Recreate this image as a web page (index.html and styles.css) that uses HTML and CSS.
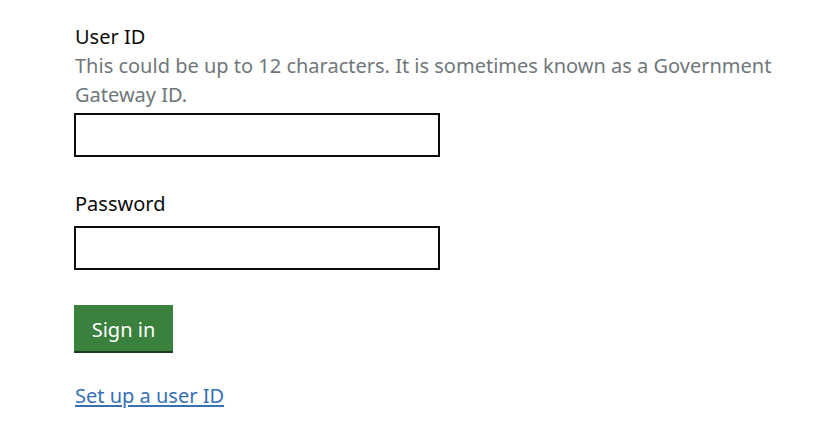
FILE: index.html
```html
<!DOCTYPE html>
<html lang="en-GB">
<head>
  <meta charset="UTF-8">
  <meta name="viewport" content="width=device-width, initial-scale=1.0">
  <title>Sign in</title>
  <link rel="stylesheet" href="styles.css">
</head>
<body>
  <form class="form" action="#">
    <div class="form-group form-group--first">
      <label class="label" for="userId">User ID</label>
      <div class="hint">This could be up to 12 characters. It is sometimes known as a Government Gateway ID.</div>
      <input class="input" id="userId" type="text">
    </div>
    <div class="form-group">
      <label class="label label--password" for="password">Password</label>
      <input class="input" id="password" type="password">
    </div>
    <button class="button" type="submit">Sign in</button>
    <p class="p"><a class="link" href="#">Set up a user ID</a></p>
  </form>
</body>
</html>
```

FILE: styles.css
```css
body {
  margin: 0;
  padding: 22px 0 0 74px;
  background-color: #FFFFFF;
  font-family: "Noto Sans", Arial, sans-serif;
  font-size: 20px;
  line-height: 29px;
  color: #0B0C0C;
}

.form {
  width: 710px;
}

.form-group {
  margin-bottom: 35px;
}

.form-group--first {
  margin-bottom: 32px;
}

.label {
  display: block;
  padding-left: 1px;
}

.label--password {
  margin-bottom: 8px;
}

.hint {
  padding-left: 1px;
  margin-bottom: 4px;
  color: #6F777B;
}

.input {
  display: block;
  box-sizing: border-box;
  width: 366px;
  height: 44px;
  margin: 0;
  border: 2px solid #0B0C0C;
  padding: 5px;
  font: inherit;
  background-color: #FFFFFF;
}

.button {
  display: block;
  box-sizing: border-box;
  width: 99px;
  height: 46px;
  margin: 0;
  border: 0;
  padding: 2px 0 0;
  font: inherit;
  color: #FFFFFF;
  background-color: #3A813D;
  box-shadow: 0 2px 0 #1E3A20;
}

.p {
  margin: 30px 0 0;
  padding-left: 1px;
}

.link {
  color: #3670B7;
  text-decoration: underline;
  text-underline-offset: 2px;
}
```
